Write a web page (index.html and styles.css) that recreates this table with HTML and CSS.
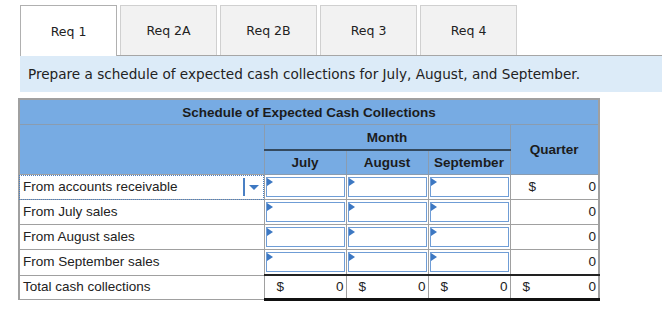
FILE: index.html
```html
<!DOCTYPE html>
<html>
<head>
<meta charset="utf-8">
<link rel="stylesheet" href="styles.css">
</head>
<body>
<div class="tabs">
  <div class="tab active">Req 1</div>
  <div class="tab">Req 2A</div>
  <div class="tab">Req 2B</div>
  <div class="tab">Req 3</div>
  <div class="tab">Req 4</div>
</div>
<div class="prompt">Prepare a schedule of expected cash collections for July, August, and September.</div>
<table class="sched">
  <colgroup>
    <col class="c-label"><col class="c-m"><col class="c-m"><col class="c-m"><col class="c-q">
  </colgroup>
  <tr class="h1"><th colspan="5">Schedule of Expected Cash Collections</th></tr>
  <tr class="h2"><th rowspan="2" class="blank"></th><th colspan="3" class="month">Month</th><th rowspan="2">Quarter</th></tr>
  <tr class="h3"><th>July</th><th>August</th><th>September</th></tr>
  <tr>
    <td class="lbl focus"><div class="sel"><span>From accounts receivable</span><span class="arrow"></span></div></td>
    <td class="in"><div class="box"></div></td>
    <td class="in"><div class="box"></div></td>
    <td class="in"><div class="box"></div></td>
    <td class="val"><div class="amt"><span>$</span><span>0</span></div></td>
  </tr>
  <tr>
    <td class="lbl">From July sales</td>
    <td class="in"><div class="box"></div></td>
    <td class="in"><div class="box"></div></td>
    <td class="in"><div class="box"></div></td>
    <td class="val"><div class="amt"><span></span><span>0</span></div></td>
  </tr>
  <tr>
    <td class="lbl">From August sales</td>
    <td class="in"><div class="box"></div></td>
    <td class="in"><div class="box"></div></td>
    <td class="in"><div class="box"></div></td>
    <td class="val"><div class="amt"><span></span><span>0</span></div></td>
  </tr>
  <tr>
    <td class="lbl">From September sales</td>
    <td class="in"><div class="box"></div></td>
    <td class="in"><div class="box"></div></td>
    <td class="in"><div class="box"></div></td>
    <td class="val"><div class="amt"><span></span><span>0</span></div></td>
  </tr>
  <tr class="total">
    <td class="lbl">Total cash collections</td>
    <td class="val"><div class="amt"><span>$</span><span>0</span></div></td>
    <td class="val"><div class="amt"><span>$</span><span>0</span></div></td>
    <td class="val"><div class="amt"><span>$</span><span>0</span></div></td>
    <td class="val"><div class="amt"><span>$</span><span>0</span></div></td>
  </tr>
</table>
</body>
</html>
```
FILE: styles.css
```css
html, body {
  margin: 0;
  padding: 0;
  background: #fff;
}
body {
  font-family: "DejaVu Sans", Verdana, sans-serif;
  color: #222;
}
.tabs {
  display: flex;
  gap: 3px;
  margin: 5px 0 0 20px;
  border-bottom: 1px solid #a6a6a6;
  height: 50px;
}
.tab {
  box-sizing: border-box;
  width: 97px;
  height: 50px;
  background: #f2f2f2;
  border: 1px solid #d0d0d0;
  border-bottom: none;
  display: flex;
  align-items: center;
  justify-content: center;
  font-size: 12.5px;
  color: #222;
}
.tab.active {
  background: #fff;
  border: 1px solid #b0b0b0;
  border-bottom: none;
  height: 51px;
  margin-bottom: -1px;
  position: relative;
}
.prompt {
  margin-left: 20px;
  background: #dcebf8;
  height: 36px;
  display: flex;
  align-items: center;
  padding-left: 8px;
  font-size: 13.6px;
  color: #222;
}
.sched {
  margin: 6px 0 0 18px;
  border-collapse: collapse;
  font-family: "Liberation Sans", Arial, sans-serif;
  table-layout: fixed;
  width: 582px;
  border-top: 2px solid #a0a0a0;
  border-left: 2px solid #a0a0a0;
  border-right: 2px solid #a0a0a0;
}
.c-label { width: 245px; }
.c-m { width: 82px; }
.c-q { width: 89px; }
.sched th {
  background: #77abe3;
  color: #1c1c1c;
  font-weight: bold;
  font-size: 13.5px;
  height: 24px;
  padding: 0;
  border: 1px solid #8a9cb0;
}
.sched .h1 th { border-left: none; border-right: none; }
.sched .blank { border-bottom: none; }
.sched .month { border-bottom: 2px solid #34495e; }
.sched .h3 th { height: 23px; }
.sched td {
  height: 22px;
  padding: 0;
  border: 1px solid #a0a0a0;
  font-size: 13.5px;
  line-height: 16px;
  color: #222;
}
.sched td.lbl { padding-left: 3px; }
.sched td.lbl.focus {
  padding: 0;
  outline: 1px dotted #4a80c4;
  outline-offset: -1px;
}
.sel {
  display: flex;
  align-items: center;
  height: 22px;
  padding-left: 3px;
}
.sel span:first-child { flex: 1; }
.arrow {
  width: 18px;
  height: 18px;
  border-left: 2px solid #4a80c4;
  margin-right: 1px;
  position: relative;
}
.arrow::after {
  content: "";
  position: absolute;
  left: 4px;
  top: 7px;
  border-left: 5px solid transparent;
  border-right: 5px solid transparent;
  border-top: 5px solid #3d78c2;
}
.sched td.in { padding: 1px; }
.box {
  box-sizing: border-box;
  height: 20px;
  border: 1px solid #6f9dd6;
  position: relative;
}
.box::before {
  content: "";
  position: absolute;
  left: 0;
  top: 0;
  border-top: 4px solid transparent;
  border-bottom: 4px solid transparent;
  border-left: 6px solid #3d78c2;
}
.amt {
  display: flex;
  justify-content: space-between;
  padding: 0 2px 0 18px;
}
.total td.val {
  border-top: 2px solid #222;
  border-bottom: 3px solid #111;
}
.total .amt { padding-left: 12px; }
```
